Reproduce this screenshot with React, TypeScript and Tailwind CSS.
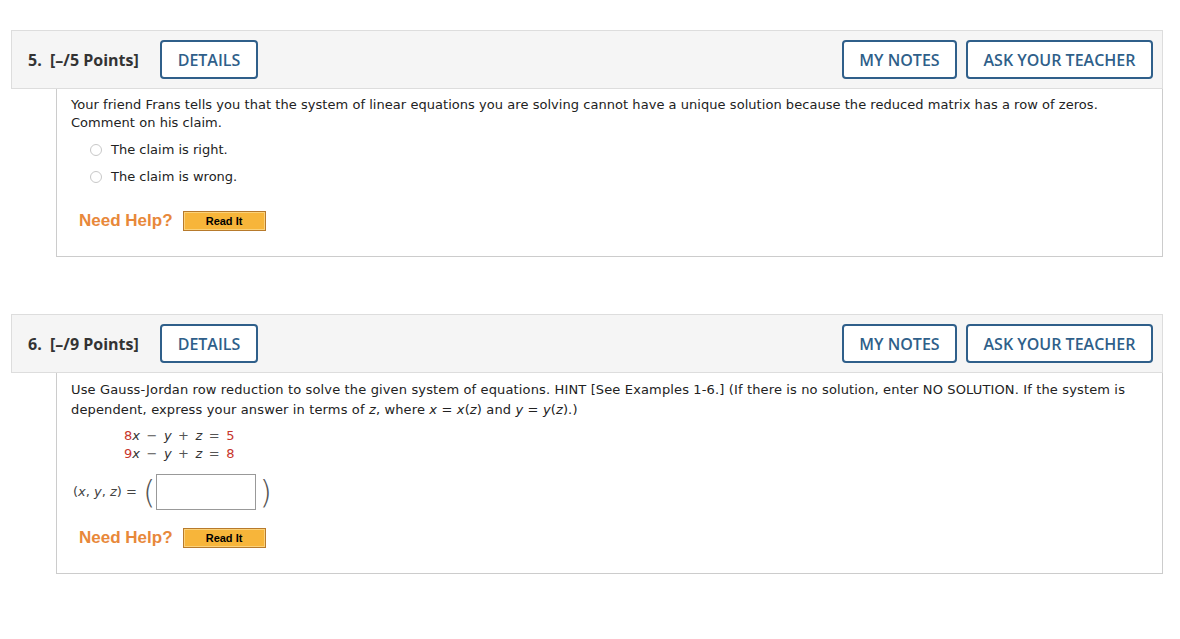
import React from "react";

const body = { fontFamily: '"DejaVu Sans", Verdana, sans-serif' };
const head = { fontFamily: '"Open Sans", sans-serif' };

function Header({ num, pts }: { num: string; pts: string }) {
  return (
    <div
      className="flex items-center h-[59px] ml-[11px] w-[1152px] bg-[#f5f5f5] border border-[#dddddd] pl-[16px] pr-[9px]"
      style={head}
    >
      <div className="text-[16px] font-bold text-[#333333] w-[132px] whitespace-nowrap">
        {num}.&nbsp; [–/{pts} Points]
      </div>
      <button className="h-[39px] w-[98px] border-2 border-[#2f5f8a] rounded-[4px] bg-white text-[#2f5f8a] text-[16px] font-semibold">
        DETAILS
      </button>
      <div className="flex-1" />
      <button className="h-[39px] w-[115px] border-2 border-[#2f5f8a] rounded-[4px] bg-white text-[#2f5f8a] text-[16px] font-semibold">
        MY NOTES
      </button>
      <button className="ml-[9px] h-[39px] w-[187px] border-2 border-[#2f5f8a] rounded-[4px] bg-white text-[#2f5f8a] text-[16px] font-semibold">
        ASK YOUR TEACHER
      </button>
    </div>
  );
}

function NeedHelp() {
  return (
    <div className="flex items-center">
      <span
        className="text-[17px] font-bold text-[#e8883a]"
        style={{ fontFamily: '"Liberation Sans", Arial, sans-serif' }}
      >
        Need Help?
      </span>
      <span
        className="ml-[10px] flex items-center justify-center w-[83px] h-[20px] border border-[#b77a2c] bg-[#f7b53a] text-[11px] font-bold text-black shadow-[inset_0_0_0_1px_#fbd27a]"
        style={{ fontFamily: '"Liberation Sans", Arial, sans-serif' }}
      >
        Read It
      </span>
    </div>
  );
}

function Radio({ label }: { label: string }) {
  return (
    <div className="flex items-center h-[27px] pl-[19px]">
      <span className="w-[12px] h-[12px] rounded-full border border-[#c8c8c8] bg-white" />
      <span className="ml-[9px]">{label}</span>
    </div>
  );
}

const V = ({ c }: { c: string }) => <i className="text-[#333]">{c}</i>;
const N = ({ c }: { c: string }) => <span className="text-[#c7352b]">{c}</span>;

function Eq({ a, b }: { a: string; b: string }) {
  return (
    <div className="flex items-center gap-[6.5px] h-[18px]">
      <span>
        <N c={a} />
        <V c="x" />
      </span>
      <span>−</span>
      <V c="y" />
      <span>+</span>
      <V c="z" />
      <span>=</span>
      <N c={b} />
    </div>
  );
}

export default function App() {
  return (
    <div className="w-[1180px] h-[639px] bg-white pt-[30px] text-[13px] text-[#222]" style={body}>
      <Header num="5" pts="5" />
      <div className="ml-[56px] w-[1107px] h-[168px] border-x border-b border-[#cccccc] pl-[14px] pt-[7px]">
        <p className="leading-[18px] tracking-[0.045px]">
          Your friend Frans tells you that the system of linear equations you are solving cannot have a unique solution because the reduced matrix has a row of zeros.
          <br />
          Comment on his claim.
        </p>
        <div className="mt-[4px]">
          <Radio label="The claim is right." />
          <Radio label="The claim is wrong." />
        </div>
        <div className="mt-[18px] pl-[8px]">
          <NeedHelp />
        </div>
      </div>

      <div className="h-[57px]" />

      <Header num="6" pts="9" />
      <div className="ml-[56px] w-[1107px] h-[201px] border-x border-b border-[#cccccc] pl-[14px] pt-[7px]">
        <p className="leading-[20px] tracking-[0.14px]">
          Use Gauss-Jordan row reduction to solve the given system of equations. HINT [See Examples 1-6.] (If there is no solution, enter NO SOLUTION. If the system is
          <br />
          dependent, express your answer in terms of <i>z</i>, where <i>x</i> = <i>x</i>(<i>z</i>) and <i>y</i> = <i>y</i>(<i>z</i>).)
        </p>
        <div className="mt-[7px] pl-[53px] text-[#555]">
          <Eq a="8" b="5" />
          <Eq a="9" b="8" />
        </div>
        <div className="mt-[11px] flex items-center pl-[2px] text-[#444]">
          <span>
            (<i>x</i>, <i>y</i>, <i>z</i>) =
          </span>
          <span className="ml-[6px] text-[32px] font-extralight leading-none text-[#555]" style={{ fontFamily: '"DejaVu Sans", sans-serif' }}>(</span>
          <span className="ml-[1px] w-[100px] h-[36px] border border-[#999] bg-white" />
          <span className="ml-[3px] text-[32px] font-extralight leading-none text-[#555]">)</span>
        </div>
        <div className="mt-[15px] pl-[8px]">
          <NeedHelp />
        </div>
      </div>
    </div>
  );
}
